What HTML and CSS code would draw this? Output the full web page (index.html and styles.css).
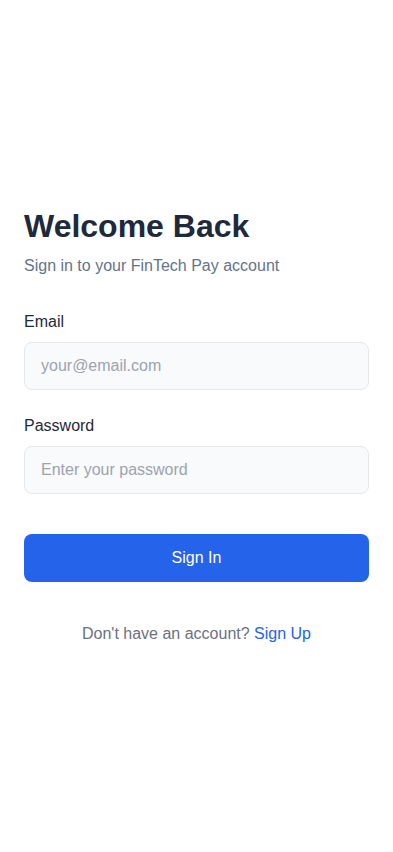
FILE: index.html
```html
<!DOCTYPE html>
<html lang="en">
  <head>
    <meta charset="UTF-8" />
    <meta name="viewport" content="width=device-width, initial-scale=1.0" />
    <title>Sign In - FinTech Pay</title>
    <link rel="stylesheet" href="styles.css">
  </head>
  <body>
    <div class="screen">
      <div class="login">
        <h1 class="title">Welcome Back</h1>
        <p class="subtitle">Sign in to your FinTech Pay account</p>

        <form class="form">
          <div class="field">
            <label class="field-label" for="email">Email</label>
            <input class="field-input" id="email" type="email" placeholder="your@email.com" />
          </div>
          <div class="field">
            <label class="field-label" for="password">Password</label>
            <input class="field-input" id="password" type="password" placeholder="Enter your password" />
          </div>
          <button class="submit" type="button">Sign In</button>
        </form>

        <p class="footer">Don't have an account? <a class="footer-link" href="#">Sign Up</a></p>
      </div>
    </div>
  </body>
</html>
```

FILE: styles.css
```css
* {
  box-sizing: border-box;
}

body {
  margin: 0;
  font-family: "Liberation Sans", Arial, Helvetica, sans-serif;
  background-color: #fff;
  color: #1f2937;
}

.screen {
  min-height: 852px;
  display: flex;
  flex-direction: column;
  justify-content: center;
  padding: 0 24px;
}

.title {
  margin: 0;
  font-size: 32px;
  line-height: 40px;
  font-weight: bold;
  color: #1e293b;
}

.subtitle {
  margin: 8px 0 0;
  font-size: 16px;
  line-height: 24px;
  color: #64748b;
}

.form {
  margin-top: 32px;
  display: flex;
  flex-direction: column;
  gap: 24px;
}

.field {
  display: flex;
  flex-direction: column;
  gap: 8px;
}

.field-label {
  font-size: 16px;
  line-height: 24px;
  color: #1f2937;
}

.field-input {
  height: 48px;
  padding: 0 16px;
  border: 1px solid #e5e7eb;
  border-radius: 8px;
  background-color: #f9fafb;
  font-family: inherit;
  font-size: 16px;
  color: #1f2937;
  outline: none;
}

.field-input::placeholder {
  color: #9ca3af;
}

.submit {
  margin-top: 16px;
  height: 48px;
  border: none;
  border-radius: 8px;
  background-color: #2563eb;
  color: #fff;
  font-family: inherit;
  font-size: 16px;
}

.footer {
  margin: 40px 0 0;
  text-align: center;
  font-size: 16px;
  line-height: 24px;
  color: #6b7280;
}

.footer-link {
  color: #2563eb;
  text-decoration: none;
}
```
